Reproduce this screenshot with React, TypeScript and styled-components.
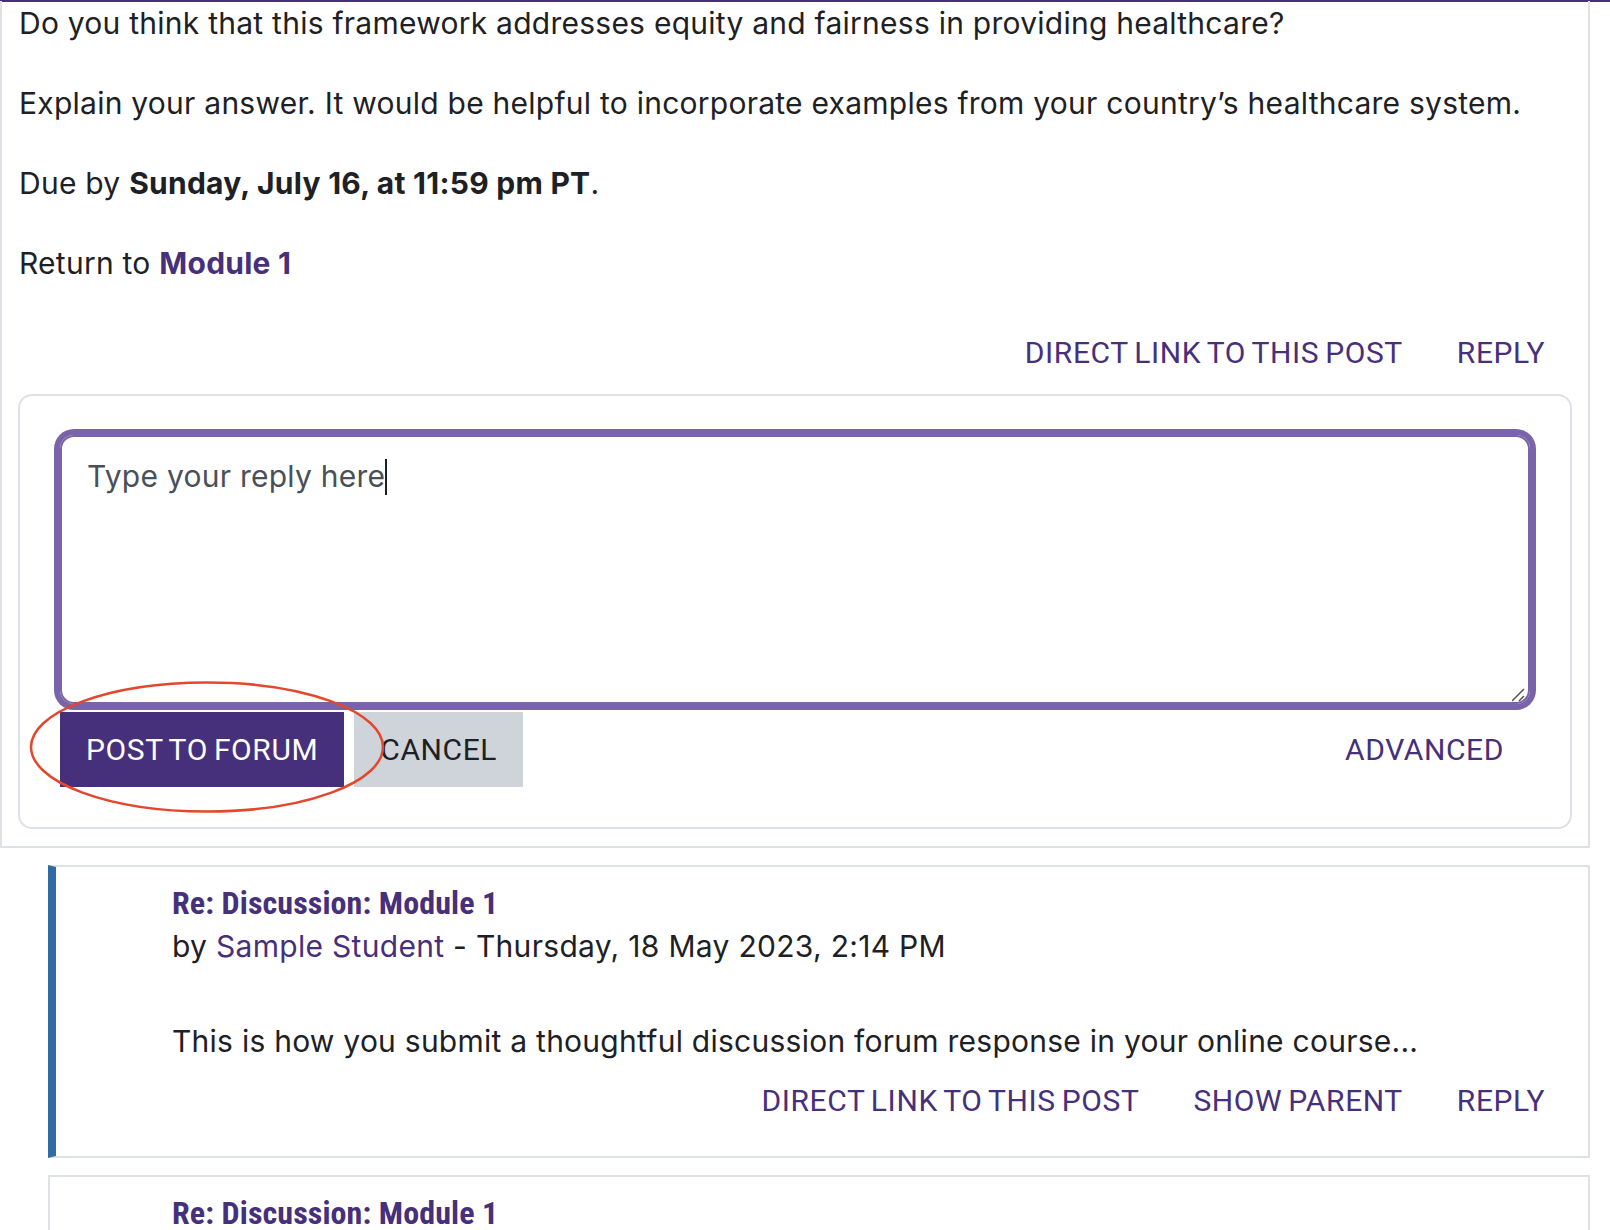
import React from 'react';
import styled, { createGlobalStyle } from 'styled-components';

const GlobalStyle = createGlobalStyle`
  html, body {
    margin: 0;
    padding: 0;
    background: #fff;
  }
  body {
    font-family: Inter, Roboto, "Liberation Sans", Arial, sans-serif;
    color: #1d2125;
  }
`;

const condensed = `"Roboto Condensed", "DejaVu Sans Condensed", "Liberation Sans Narrow", Roboto, sans-serif`;
const caps = `Roboto, "Liberation Sans", Arial, sans-serif`;

const purple = '#47307b';

const Page = styled.div`
  width: 1610px;
  border-top: 2px solid ${purple};
`;

const MainPost = styled.div`
  margin-right: 20px;
  border: 2px solid #dee2e6;
  border-top: none;
  padding: 0 16px 17px 16px;
`;

const Para = styled.p`
  margin: 0 0 35px;
  padding-left: 1px;
  font-size: 30px;
  line-height: 45px;
  letter-spacing: 0.25px;

  &:first-child {
    margin-top: -1px;
  }
`;

const Strong = styled.strong`
  font-weight: 700;
`;

const BoldLink = styled.a`
  color: ${purple};
  font-weight: 700;
  text-decoration: none;
`;

const Actions = styled.div<{ $top?: number }>`
  display: flex;
  justify-content: flex-end;
  padding-top: ${(p) => p.$top ?? 0}px;
`;

const ActionLink = styled.a`
  padding: 0 27px;
  font-family: ${caps};
  font-size: 30px;
  line-height: 45px;
  letter-spacing: 0.6px;
  word-spacing: -2px;
  color: ${purple};
  text-decoration: none;
  text-transform: uppercase;
  white-space: nowrap;
`;

const ReplyBox = styled.div`
  margin-top: 19px;
  border: 2px solid #dee2e6;
  border-radius: 14px;
  padding: 39px 40px 40px 40px;
`;

const Editor = styled.div`
  position: relative;
  height: 269px;
  border: 2px solid #7a63a8;
  border-radius: 14px;
  box-shadow: 0 0 0 6px #7a63a8;
  padding: 17px 25px;
  font-size: 30px;
  line-height: 45px;
  letter-spacing: 0.25px;
  color: #495057;
  box-sizing: border-box;
`;

const Caret = styled.span`
  display: inline-block;
  width: 2px;
  height: 36px;
  vertical-align: -8px;
  background: #1d2125;
`;

const Grip = styled.svg`
  position: absolute;
  right: 0;
  bottom: 0;
`;

const ButtonRow = styled.div`
  position: relative;
  display: flex;
  align-items: center;
  gap: 10px;
  margin-top: 8px;
`;

const Button = styled.button<{ $primary?: boolean }>`
  height: 75px;
  padding: 0 26px;
  border: none;
  border-radius: 0;
  background: ${(p) => (p.$primary ? purple : '#ced4da')};
  color: ${(p) => (p.$primary ? '#fff' : '#1d2125')};
  font-family: ${caps};
  font-size: 30px;
  letter-spacing: 0.6px;
  word-spacing: -2px;
  text-transform: uppercase;
  cursor: pointer;
`;

const Advanced = styled(ActionLink)`
  margin-left: auto;
  padding: 0 26px;
`;

const Highlight = styled.svg`
  position: absolute;
  left: -32px;
  top: -33px;
  pointer-events: none;
  z-index: 2;
`;

const ReplyPost = styled.div<{ $active?: boolean }>`
  margin: 17px 20px 0 48px;
  border: 2px solid #dee2e6;
  border-left: ${(p) => (p.$active ? '8px solid #2e6ca3' : '2px solid #dee2e6')};
  padding: 15px 16px 33px ${(p) => (p.$active ? '116px' : '122px')};
`;

const PostTitle = styled.h3`
  margin: 0;
  font-family: ${condensed};
  font-weight: 700;
  font-size: 32px;
  line-height: 42px;
  letter-spacing: 0.1px;
  color: ${purple};
`;

const Byline = styled.div`
  font-size: 30px;
  line-height: 45px;
  letter-spacing: 0.3px;
`;

const Author = styled.a`
  color: ${purple};
  text-decoration: none;
`;

const PostBody = styled.p`
  margin: 50px 0 0;
  font-size: 30px;
  line-height: 45px;
  letter-spacing: 0.25px;
`;

const replies = [
  {
    title: 'Re: Discussion: Module 1',
    author: 'Sample Student',
    date: 'Thursday, 18 May 2023, 2:14 PM',
    body: 'This is how you submit a thoughtful discussion forum response in your online course...',
    active: true,
  },
  {
    title: 'Re: Discussion: Module 1',
    author: 'Sample Student',
    date: 'Thursday, 18 May 2023, 2:20 PM',
    body: 'This is how you submit a thoughtful discussion forum response in your online course...',
    active: false,
  },
];

const App = () => {
  return (
    <Page>
      <GlobalStyle />
      <MainPost>
        <Para>Do you think that this framework addresses equity and fairness in providing healthcare?</Para>
        <Para>
          Explain your answer. It would be helpful to incorporate examples from your country’s healthcare system.
        </Para>
        <Para>
          Due by <Strong>Sunday, July 16, at 11:59 pm PT</Strong>.
        </Para>
        <Para>
          Return to <BoldLink href="#">Module 1</BoldLink>
        </Para>
        <Actions $top={9}>
          <ActionLink href="#">Direct link to this post</ActionLink>
          <ActionLink href="#">Reply</ActionLink>
        </Actions>
        <ReplyBox>
          <Editor role="textbox">
            Type your reply here
            <Caret />
            <Grip width="16" height="16" viewBox="0 0 16 16">
              <path d="M0 15 L12 3 M7 15 L12 10" stroke="#555" strokeWidth="1.5" fill="none" />
            </Grip>
          </Editor>
          <ButtonRow>
            <Button $primary>Post to forum</Button>
            <Button>Cancel</Button>
            <Advanced href="#">Advanced</Advanced>
            <Highlight width="360" height="136" viewBox="0 0 360 136">
              <ellipse cx="179" cy="68" rx="176" ry="64.5" fill="none" stroke="#e4472b" strokeWidth="2.5" />
            </Highlight>
          </ButtonRow>
        </ReplyBox>
      </MainPost>
      {replies.map((r, i) => (
        <ReplyPost key={i} $active={r.active}>
          <PostTitle>{r.title}</PostTitle>
          <Byline>
            by <Author href="#">{r.author}</Author> - {r.date}
          </Byline>
          <PostBody>{r.body}</PostBody>
          <Actions $top={14}>
            <ActionLink href="#">Direct link to this post</ActionLink>
            <ActionLink href="#">Show parent</ActionLink>
            <ActionLink href="#">Reply</ActionLink>
          </Actions>
        </ReplyPost>
      ))}
    </Page>
  );
};

export default App;
